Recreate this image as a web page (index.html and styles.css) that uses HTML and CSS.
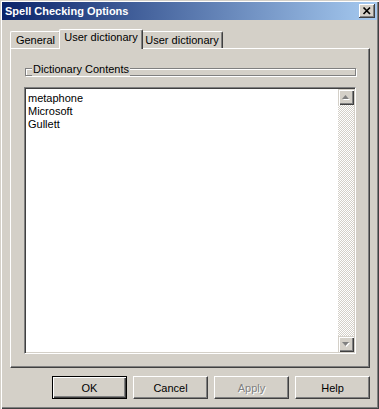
FILE: index.html
```html
<!DOCTYPE html>
<html>
<head>
    <meta charset="UTF-8">
    <title>Spell Checking Options</title>
    <link rel="stylesheet" href="styles.css">
</head>
<body>
    <div class="window">
        <div class="titlebar">
            <span class="title">Spell Checking Options</span>
            <button class="close">
                <svg viewBox="0 0 16 14">
                    <path d="M4.5 3.5 L11 10 M11 3.5 L4.5 10"/>
                </svg>
            </button>
        </div>

        <div class="content">
            <div class="tabs">
                <div class="tab tab-general">General</div>
                <div class="tab tab-active">User dictionary</div>
                <div class="tab tab-third">User dictionary</div>
            </div>

            <div class="panel">
                <div class="group">
                    <span class="caption">Dictionary Contents</span>
                </div>

                <div class="listbox">
                    <div class="items">
                        <div class="item">metaphone</div>
                        <div class="item">Microsoft</div>
                        <div class="item">Gullett</div>
                    </div>
                    <div class="scrollbar">
                        <div class="scroll-btn">
                            <svg viewBox="0 0 16 16">
                                <polygon class="shadow" points="5,11 8.5,7 12,11"/>
                                <polygon points="4,10 7.5,6 11,10"/>
                            </svg>
                        </div>
                        <div class="track"></div>
                        <div class="scroll-btn">
                            <svg viewBox="0 0 16 16">
                                <polygon class="shadow" points="5,7 12,7 8.5,11"/>
                                <polygon points="4,6 11,6 7.5,10"/>
                            </svg>
                        </div>
                    </div>
                </div>
            </div>

            <div class="buttons">
                <button class="btn btn-default">OK</button>
                <button class="btn">Cancel</button>
                <button class="btn" disabled>Apply</button>
                <button class="btn">Help</button>
            </div>
        </div>
    </div>
</body>
</html>
```

FILE: styles.css
```css
* { margin: 0; padding: 0; box-sizing: border-box; }
body {
    background: #D4D0C8;
    font-family: "Liberation Sans", Arial, sans-serif;
    font-size: 11px;
    line-height: 13px;
    color: #000;
}

.window {
    width: 379px;
    height: 409px;
    padding: 2px;
    background: #D4D0C8;
    box-shadow: inset 1px 1px #D4D0C8, inset 2px 2px #fff,
                inset -1px -1px #404040, inset -2px -2px #808080;
}

/* title bar */
.titlebar {
    height: 18px;
    display: flex;
    align-items: center;
    justify-content: space-between;
    padding: 0 2px 0 3px;
    background: linear-gradient(to right, #0A246A, #A6CAF0);
}
.title {
    color: #fff;
    font-weight: bold;
    font-size: 11px;
}
.close {
    width: 16px;
    height: 14px;
    background: #D4D0C8;
    border: none;
    box-shadow: inset -1px -1px #404040, inset 1px 1px #fff, inset -2px -2px #808080;
    display: flex;
}
.close svg { width: 16px; height: 14px; }
.close path { stroke: #000; stroke-width: 1.7; fill: none; }

/* dialog body */
.content {
    padding: 0 7px 0 8px;
}

.tabs {
    display: flex;
    align-items: flex-end;
    height: 19px;
    margin-top: 9px;
    position: relative;
    z-index: 1;
}
.tab {
    height: 17px;
    padding-top: 2px;
    text-align: center;
    background: #D4D0C8;
    border-top: 1px solid #fff;
    border-left: 1px solid #fff;
    border-right: 1px solid #404040;
    border-radius: 2px 2px 0 0;
    box-shadow: inset -1px 0 #808080;
}
.tab-general { width: 51px; }
.tab-active {
    width: 84px;
    height: 20px;
    padding-top: 1px;
    margin: 0 -2px -1px -2px;
    position: relative;
    z-index: 2;
}
.tab-third { width: 82px; }

.panel {
    height: 320px;
    padding: 19px 13px 12px 13px;
    border-top: 1px solid #fff;
    border-left: 1px solid #fff;
    border-right: 1px solid #404040;
    border-bottom: 1px solid #404040;
    box-shadow: inset -1px -1px #808080;
}

/* group box */
.group {
    height: 8px;
    margin-left: 1px;
    border: 1px solid #808080;
    box-shadow: inset 1px 1px #fff, 1px 1px #fff;
}
.caption {
    display: block;
    width: fit-content;
    margin: -6px 0 0 6px;
    padding: 0 1px;
    background: #D4D0C8;
}

/* list box */
.listbox {
    height: 267px;
    margin-top: 11px;
    display: flex;
    background: #fff;
    border: 1px solid;
    border-color: #808080 #fff #fff #808080;
    box-shadow: inset 1px 1px #404040, inset -1px -1px #D4D0C8;
    padding: 1px;
}
.items {
    flex: 1;
    padding: 3px 2px;
}
.scrollbar {
    width: 16px;
    display: flex;
    flex-direction: column;
}
.scroll-btn {
    height: 16px;
    background: #D4D0C8;
    box-shadow: inset 1px 1px #D4D0C8, inset 2px 2px #fff,
                inset -1px -1px #404040, inset -2px -2px #808080;
}
.scroll-btn svg { width: 16px; height: 16px; display: block; }
.scroll-btn polygon { fill: #808080; }
.scroll-btn polygon.shadow { fill: #fff; }
.track {
    flex: 1;
    background: repeating-conic-gradient(#fff 0 25%, #D4D0C8 0 50%) 0 0 / 2px 2px;
}

/* bottom buttons */
.buttons {
    display: flex;
    justify-content: flex-end;
    gap: 6px;
    margin-top: 8px;
}
.btn {
    width: 75px;
    height: 23px;
    font-family: inherit;
    font-size: 11px;
    color: #000;
    background: #D4D0C8;
    border: 1px solid;
    border-color: #fff #404040 #404040 #fff;
    box-shadow: inset -1px -1px #808080;
}
.btn-default {
    border-color: #000;
    box-shadow: inset 1px 1px #fff, inset -1px -1px #404040, inset -2px -2px #808080;
}
.btn:disabled {
    color: #808080;
    text-shadow: 1px 1px #fff;
}
```
